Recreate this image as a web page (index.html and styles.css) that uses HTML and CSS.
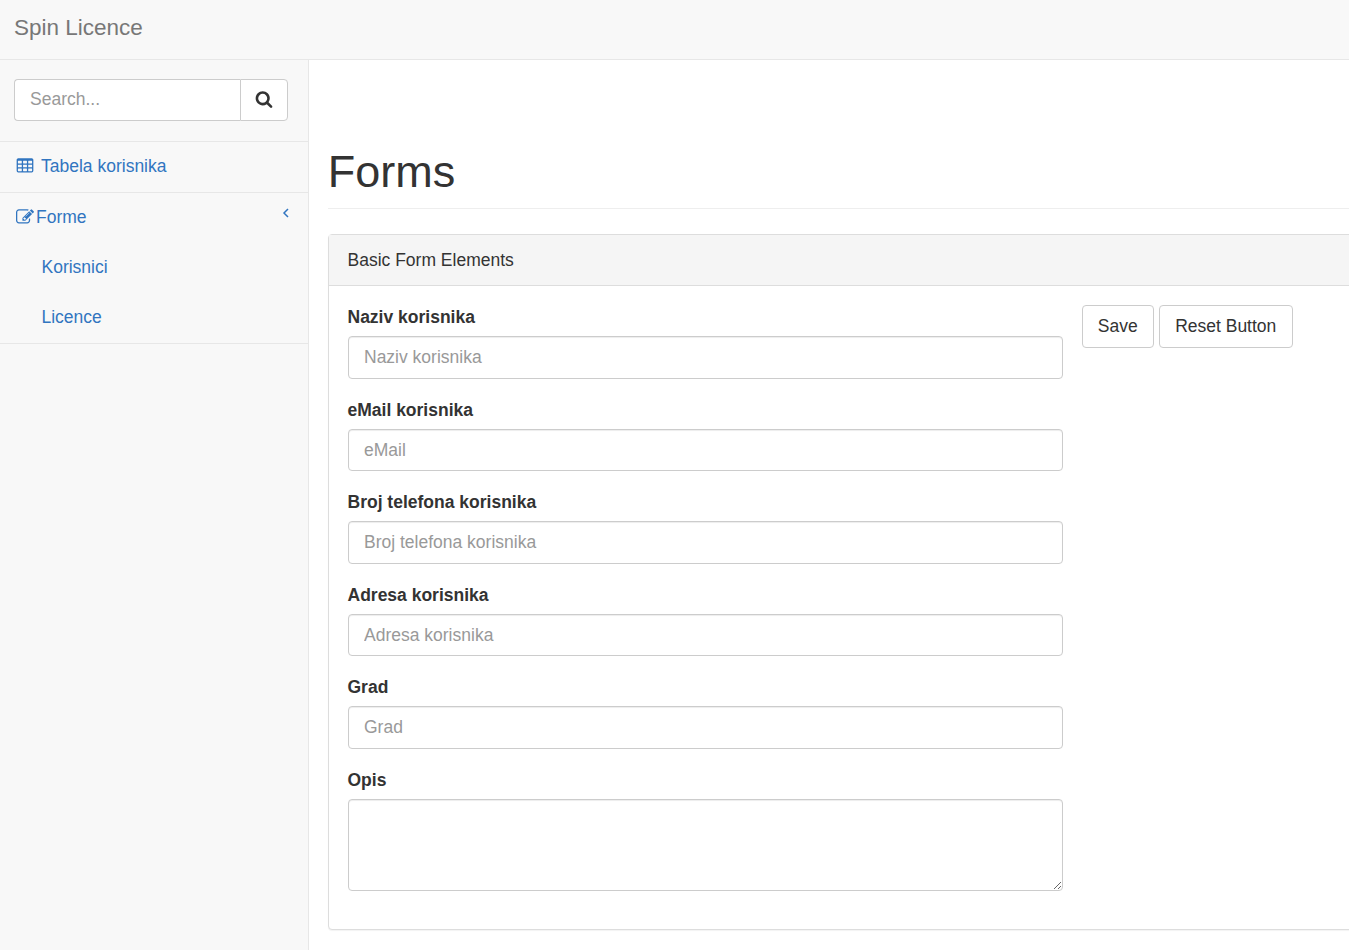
FILE: index.html
```html
<!DOCTYPE html>
<html lang="en">
<head>
<meta charset="utf-8">
<title>Spin Licence</title>
<link rel="stylesheet" href="styles.css">
</head>
<body>
<nav class="navbar"><a class="brand">Spin Licence</a></nav>
<div class="layout">
  <aside class="sidebar">
    <div class="search-row">
      <div class="search">
        <input class="search-input" type="text" placeholder="Search...">
        <button class="search-btn" type="button" aria-label="Search">
          <svg class="icon-search" width="18" height="18" viewBox="0 0 1792 1792"><path fill="#333" d="M1216 832q0-185-131.500-316.500t-316.500-131.500-316.500 131.500-131.500 316.500 131.500 316.500 316.500 131.500 316.500-131.500 131.500-316.500zm512 832q0 52-38 90t-90 38q-54 0-90-38l-343-342q-179 124-399 124-143 0-273.500-55.500t-225-150-150-225-55.500-273.500 55.500-273.500 150-225 225-150 273.500-55.500 273.500 55.500 225 150 150 225 55.500 273.500q0 220-124 399l343 343q37 37 37 90z"/></svg>
        </button>
      </div>
    </div>
    <a class="side-link">
      <svg class="icon-table" width="18" height="18" viewBox="0 0 1792 1792"><path class="icon-fill" d="M576 1376v-192q0-14-9-23t-23-9h-320q-14 0-23 9t-9 23v192q0 14 9 23t23 9h320q14 0 23-9t9-23zm0-384v-192q0-14-9-23t-23-9h-320q-14 0-23 9t-9 23v192q0 14 9 23t23 9h320q14 0 23-9t9-23zm512 384v-192q0-14-9-23t-23-9h-320q-14 0-23 9t-9 23v192q0 14 9 23t23 9h320q14 0 23-9t9-23zm-512-768v-192q0-14-9-23t-23-9h-320q-14 0-23 9t-9 23v192q0 14 9 23t23 9h320q14 0 23-9t9-23zm512 384v-192q0-14-9-23t-23-9h-320q-14 0-23 9t-9 23v192q0 14 9 23t23 9h320q14 0 23-9t9-23zm512 384v-192q0-14-9-23t-23-9h-320q-14 0-23 9t-9 23v192q0 14 9 23t23 9h320q14 0 23-9t9-23zm-512-768v-192q0-14-9-23t-23-9h-320q-14 0-23 9t-9 23v192q0 14 9 23t23 9h320q14 0 23-9t9-23zm512 384v-192q0-14-9-23t-23-9h-320q-14 0-23 9t-9 23v192q0 14 9 23t23 9h320q14 0 23-9t9-23zm0-384v-192q0-14-9-23t-23-9h-320q-14 0-23 9t-9 23v192q0 14 9 23t23 9h320q14 0 23-9t9-23zm128-320v1088q0 66-47 113t-113 47h-1344q-66 0-113-47t-47-113v-1088q0-66 47-113t113-47h1344q66 0 113 47t47 113z"/></svg>
      <span>Tabela korisnika</span>
    </a>
    <div class="side-group">
      <a class="side-link forme">
        <svg class="icon-edit" width="18" height="18" viewBox="0 0 1792 1792"><path class="icon-fill" d="M888 1184l116-116-152-152-116 116v56h96v96h56zm440-720q-16-16-33 1l-350 350q-17 17-1 33t33-1l350-350q17-17 1-33zm80 594v190q0 119-84.500 203.500t-203.500 84.500h-832q-119 0-203.500-84.500t-84.500-203.500v-832q0-119 84.500-203.500t203.500-84.500h832q63 0 117 25 15 7 18 23 3 17-9 29l-49 49q-14 14-32 8-23-6-45-6h-832q-66 0-113 47t-47 113v832q0 66 47 113t113 47h832q66 0 113-47t47-113v-126q0-13 9-22l64-64q15-15 35-7t20 29zm-96-738l288 288-672 672h-288v-288zm444 132l-92 92-288-288 92-92q28-28 68-28t68 28l152 152q28 28 28 68t-28 68z"/></svg>
        <span>Forme</span>
        <svg class="chevron" width="8" height="12" viewBox="0 0 8 12"><path d="M6 2 L2 6 L6 10" fill="none" stroke="#3175c0" stroke-width="1.5"/></svg>
      </a>
      <a class="sub-link">Korisnici</a>
      <a class="sub-link">Licence</a>
    </div>
  </aside>
  <main class="content">
    <h1 class="page-title">Forms</h1>
    <section class="panel">
      <header class="panel-head">Basic Form Elements</header>
      <div class="panel-body">
        <form class="form-col">
          <div class="field"><label>Naziv korisnika</label><input type="text" placeholder="Naziv korisnika"></div>
          <div class="field"><label>eMail korisnika</label><input type="text" placeholder="eMail"></div>
          <div class="field"><label>Broj telefona korisnika</label><input type="text" placeholder="Broj telefona korisnika"></div>
          <div class="field"><label>Adresa korisnika</label><input type="text" placeholder="Adresa korisnika"></div>
          <div class="field"><label>Grad</label><input type="text" placeholder="Grad"></div>
          <div class="field"><label>Opis</label><textarea rows="4"></textarea></div>
        </form>
        <div class="actions">
          <button class="btn" type="button">Save</button>
          <button class="btn" type="button">Reset Button</button>
        </div>
      </div>
    </section>
  </main>
</div>
</body>
</html>
```
FILE: styles.css
```css
* { box-sizing: border-box; }
html, body { margin: 0; height: 100%; }
body { font-family: "Liberation Sans", Arial, sans-serif; font-size: 17.5px; line-height: 1.42857; color: #333; background: #fff; overflow: hidden; }
.navbar { height: 60px; background: #f8f8f8; border-bottom: 1px solid #e7e7e7; padding: 0 14px 2px; display: flex; align-items: center; }
.brand { font-size: 22.5px; color: #777; }
.layout { display: flex; height: 890px; }
.sidebar { width: 309px; flex: none; background: #f8f8f8; border-right: 1px solid #e7e7e7; }
.search-row { padding: 19px 20px 20px 14px; border-bottom: 1px solid #e7e7e7; height: 82px; }
.search { display: flex; height: 42px; }
.search-input { width: 226px; height: 42px; border: 1px solid #ccc; border-right: 0; border-radius: 4px 0 0 4px; padding: 0 15px 2px; font: inherit; color: #555; background: #fff; }
.search-btn { width: 48px; height: 42px; border: 1px solid #ccc; border-radius: 0 4px 4px 0; background: #fff; padding: 0 0 2px; display: flex; align-items: center; justify-content: center; }
input::placeholder, textarea::placeholder { color: #999; opacity: 1; }
.icon-fill { fill: #3175c0; }
.side-link { display: flex; align-items: center; height: 51px; color: #3175c0; padding: 0 0 2px 16px; border-bottom: 1px solid #e7e7e7; position: relative; }
.icon-table { margin-right: 7px; }
.icon-edit { margin-right: 2px; }
.side-group { border-bottom: 1px solid #e7e7e7; }
.forme { border-bottom: 0; height: 50px; }
.chevron { position: absolute; right: 18px; top: 14px; }
.sub-link { display: flex; align-items: center; height: 50px; padding: 0 0 2px 41.5px; color: #3175c0; }
.content { flex: 1; min-width: 0; padding-left: 18.75px; overflow: hidden; }
.page-title { font-size: 45px; font-weight: 500; line-height: 1.1; margin: 0 0 25px; padding: 87px 0 11px; border-bottom: 1px solid #eee; color: #333; }
.panel { width: 1040px; height: 696px; border: 1px solid #ddd; border-radius: 4px; background: #fff; box-shadow: 0 1px 1px rgba(0,0,0,.05); }
.panel-head { height: 51px; background: #f5f5f5; border-bottom: 1px solid #ddd; padding: 2px 18.75px 0; display: flex; align-items: center; color: #333; }
.panel-body { display: flex; padding: 19.75px 18.75px 0; }
.form-col { width: 715px; flex: none; margin-right: 19px; }
.field { height: 92.5px; }
.field label { display: block; font-weight: 700; height: 31px; line-height: 25px; }
.field input, .field textarea { display: block; width: 100%; border: 1px solid #ccc; border-radius: 4px; padding: 0 15.5px; font: inherit; color: #555; background: #fff; box-shadow: inset 0 1px 1px rgba(0,0,0,.075); }
.field input { height: 42.5px; }
.field textarea { height: 92px; padding-top: 8px; }
.actions { display: flex; gap: 5px; align-items: flex-start; }
.btn { height: 43px; padding: 0 15.25px; border: 1px solid #ccc; border-radius: 4px; background: #fff; font: inherit; color: #333; }
```
